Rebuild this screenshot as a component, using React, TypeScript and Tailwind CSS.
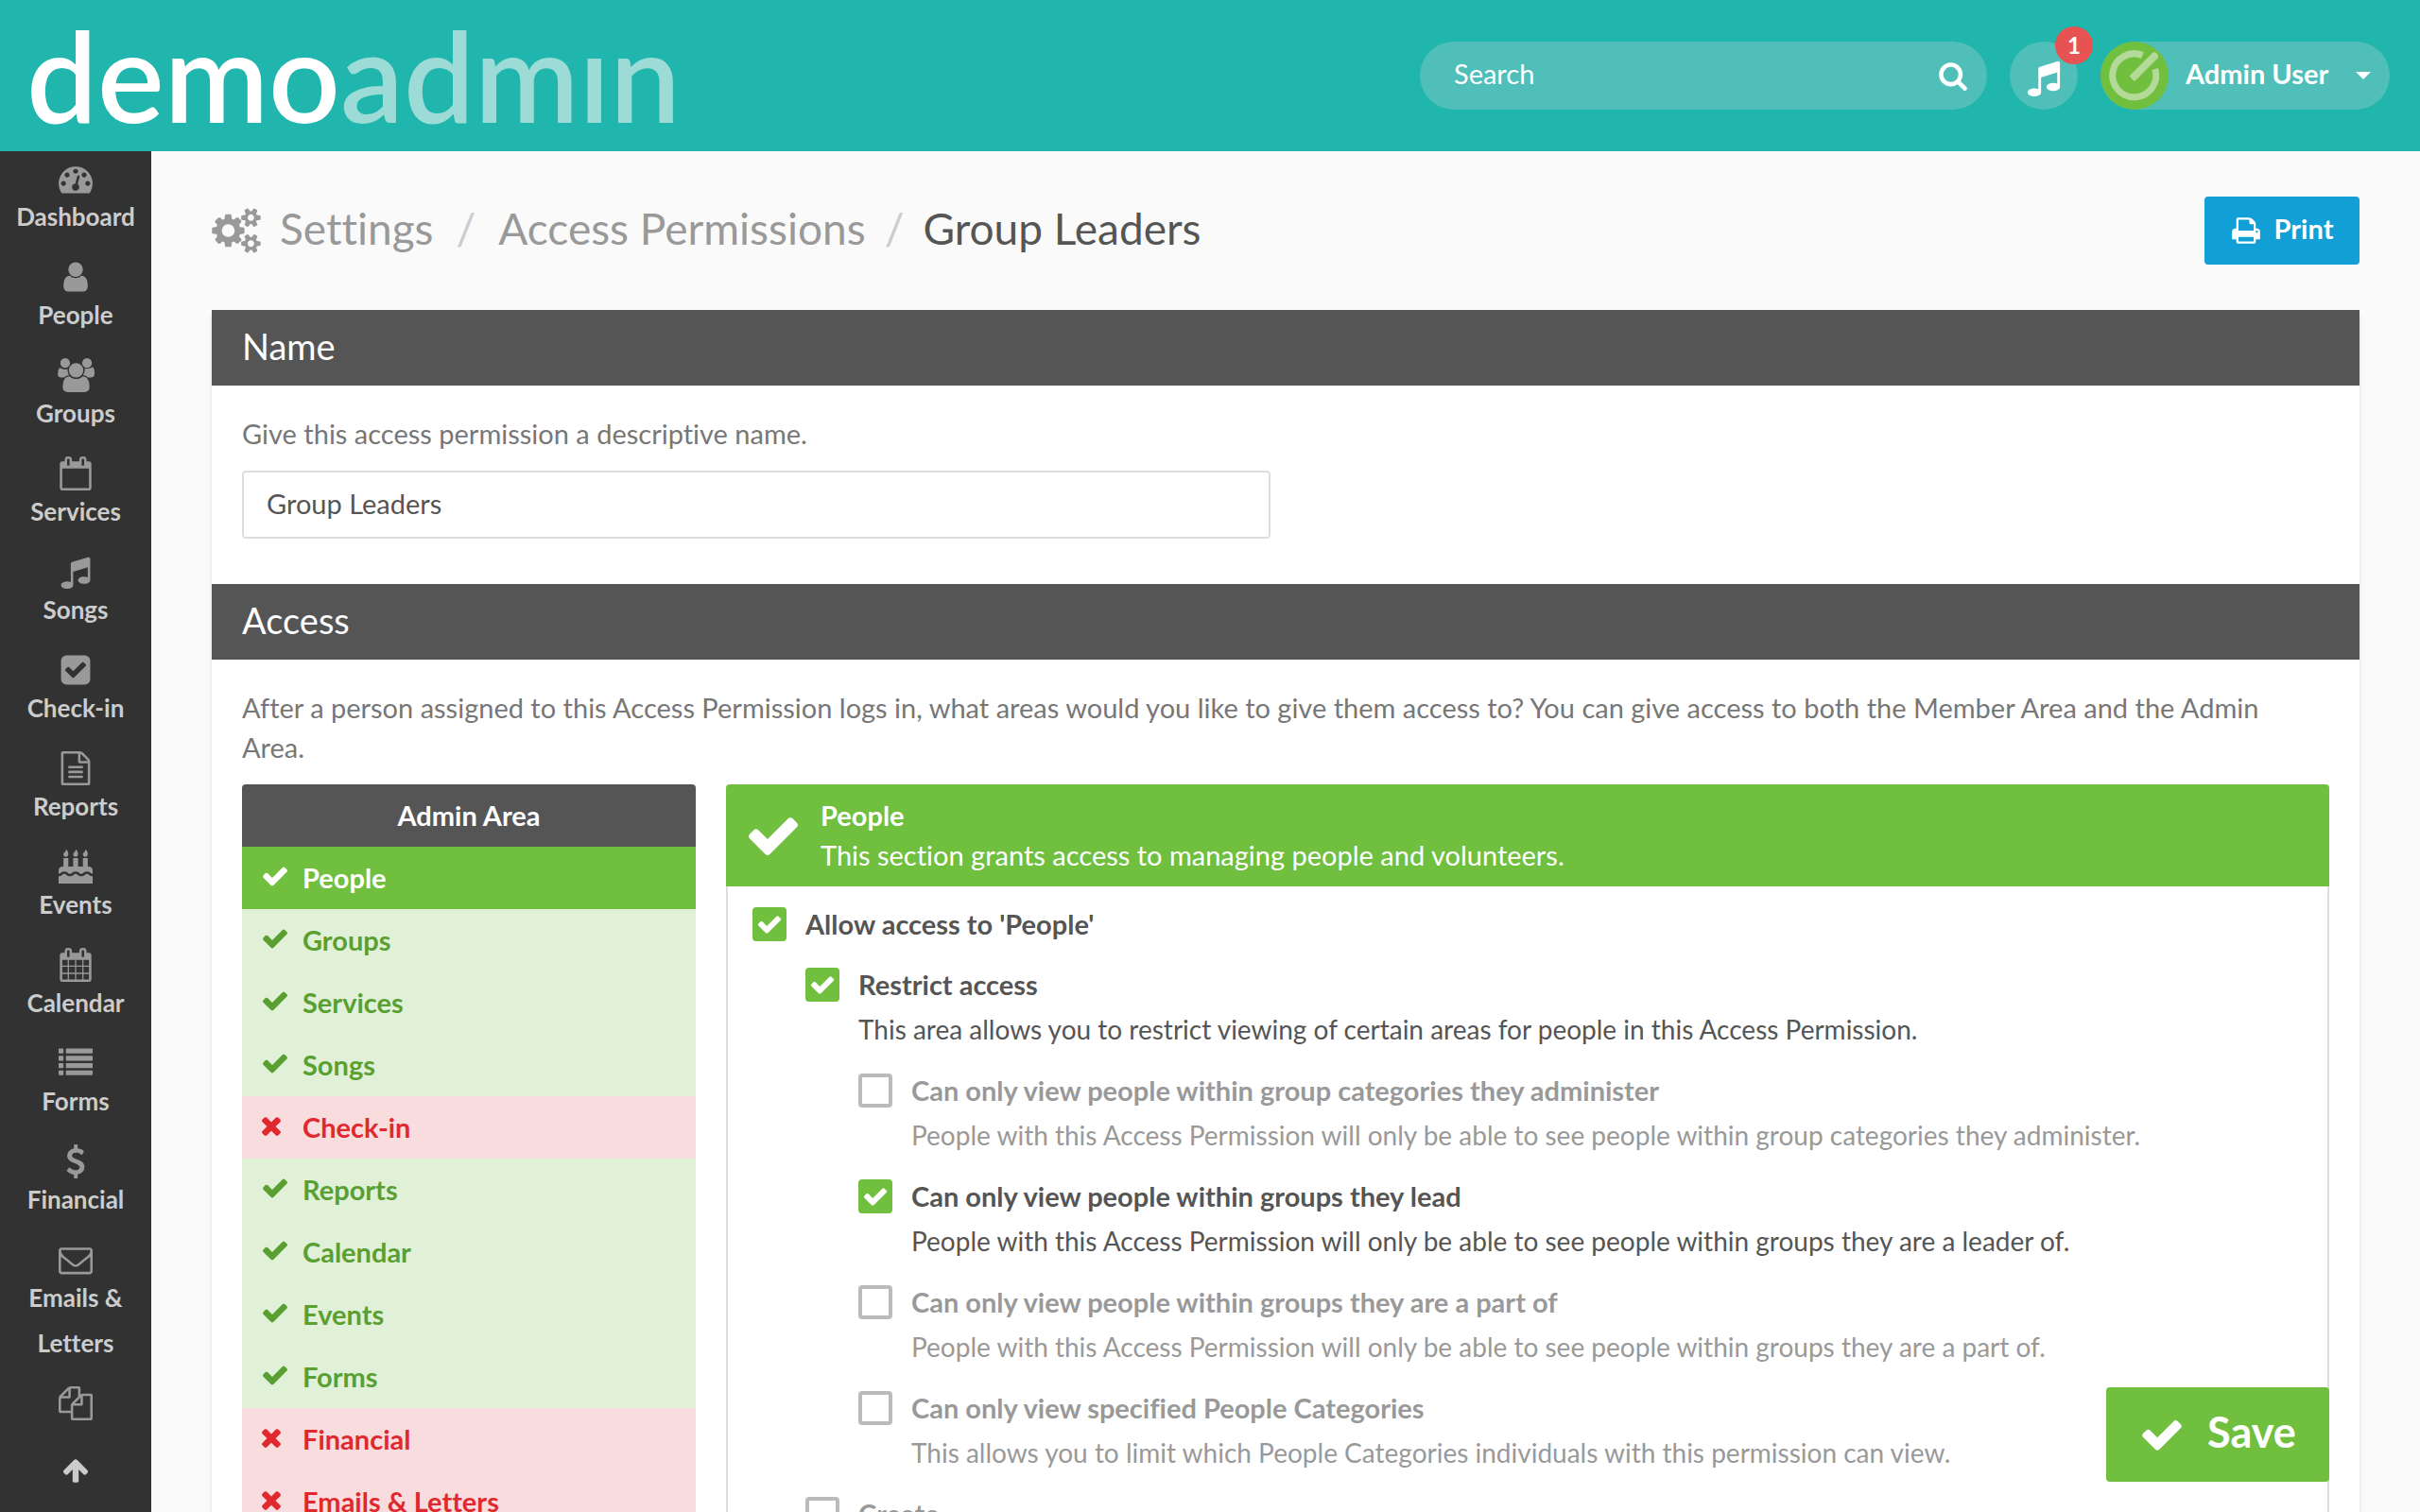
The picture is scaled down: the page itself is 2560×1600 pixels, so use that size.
import type { ReactNode } from 'react'
import clsx from 'clsx'

const icons = {
  dashboard:
    'M384 1152q0-53-37.5-90.5t-90.5-37.5-90.5 37.5-37.5 90.5 37.5 90.5 90.5 37.5 90.5-37.5 37.5-90.5zm192-448q0-53-37.5-90.5t-90.5-37.5-90.5 37.5-37.5 90.5 37.5 90.5 90.5 37.5 90.5-37.5 37.5-90.5zm428 481l101-382q6-26-7.5-48.5t-38.5-29.5-48 6.5-30 39.5l-101 382q-60 5-107 43.5t-63 98.5q-20 77 20 146t117 89 146-20 89-117q16-60-6-117t-72-91zm660-33q0-53-37.5-90.5t-90.5-37.5-90.5 37.5-37.5 90.5 37.5 90.5 90.5 37.5 90.5-37.5 37.5-90.5zm-640-640q0-53-37.5-90.5t-90.5-37.5-90.5 37.5-37.5 90.5 37.5 90.5 90.5 37.5 90.5-37.5 37.5-90.5zm448 192q0-53-37.5-90.5t-90.5-37.5-90.5 37.5-37.5 90.5 37.5 90.5 90.5 37.5 90.5-37.5 37.5-90.5zm320 448q0 261-141 483-19 29-54 29h-1402q-35 0-54-29-141-221-141-483 0-182 71-348t191-286 286-191 348-71 348 71 286 191 191 286 71 348z',
  user: 'M1536 1399q0 109-62.5 187t-150.5 78h-854q-88 0-150.5-78t-62.5-187q0-85 8.5-160.5t31.5-152 58.5-131 94-89 134.5-34.5q131 128 313 128t313-128q76 0 134.5 34.5t94 89 58.5 131 31.5 152 8.5 160.5zm-256-887q0 159-112.5 271.5t-271.5 112.5-271.5-112.5-112.5-271.5 112.5-271.5 271.5-112.5 271.5 112.5 112.5 271.5z',
  users:
    'M529 896q-162 5-265 128h-134q-82 0-138-40.5t-56-118.5q0-353 124-353 6 0 43.5 21t97.5 42.5 119 21.5q67 0 133-23-5 37-5 66 0 159 93 291zm1071 637q0 120-73 189.5t-194 69.5h-874q-121 0-194-69.5t-73-189.5q0-53 3.5-103.5t14-109 26.5-108.5 43-97.5 62-81 85.5-53.5 111.5-20q10 0 43 21.5t73 48 107 48 135 21.5 135-21.5 107-48 73-48 43-21.5q61 0 111.5 20t85.5 53.5 62 81 43 97.5 26.5 108.5 14 109 3.5 103.5zm-1024-1277q0 106-75 181t-181 75-181-75-75-181 75-181 181-75 181 75 75 181zm704 384q0 159-112.5 271.5t-271.5 112.5-271.5-112.5-112.5-271.5 112.5-271.5 271.5-112.5 271.5 112.5 112.5 271.5zm576 225q0 78-56 118.5t-138 40.5h-134q-103-123-265-128 93-132 93-291 0-29-5-66 66 23 133 23 59 0 119-21.5t97.5-42.5 43.5-21q124 0 124 353zm-128-609q0 106-75 181t-181 75-181-75-75-181 75-181 181-75 181 75 75 181z',
  calendarBlank:
    'M192 1664h1408v-1024h-1408v1024zm384-1216v-288q0-14-9-23t-23-9h-64q-14 0-23 9t-9 23v288q0 14 9 23t23 9h64q14 0 23-9t9-23zm768 0v-288q0-14-9-23t-23-9h-64q-14 0-23 9t-9 23v288q0 14 9 23t23 9h64q14 0 23-9t9-23zm384-64v1280q0 52-38 90t-90 38h-1408q-52 0-90-38t-38-90v-1280q0-52 38-90t90-38h128v-96q0-66 47-113t113-47h64q66 0 113 47t47 113v96h384v-96q0-66 47-113t113-47h64q66 0 113 47t47 113v96h128q52 0 90 38t38 90z',
  music:
    'M1664 224v1120q0 50-34 89t-86 60.5-103.5 32-96.5 10.5-96.5-10.5-103.5-32-86-60.5-34-89 34-89 86-60.5 103.5-32 96.5-10.5q105 0 192 39v-537l-768 237v709q0 50-34 89t-86 60.5-103.5 32-96.5 10.5-96.5-10.5-103.5-32-86-60.5-34-89 34-89 86-60.5 103.5-32 96.5-10.5q105 0 192 39v-967q0-31 19-56.5t49-35.5l832-256q12-4 28-4 40 0 68 28t28 68z',
  checkSquare:
    'M813 1299l614-614q19-19 19-45t-19-45l-102-102q-19-19-45-19t-45 19l-467 467-211-211q-19-19-45-19t-45 19l-102 102q-19 19-19 45t19 45l358 358q19 19 45 19t45-19zm851-883v960q0 119-84.5 203.5t-203.5 84.5h-960q-119 0-203.5-84.5t-84.5-203.5v-960q0-119 84.5-203.5t203.5-84.5h960q119 0 203.5 84.5t84.5 203.5z',
  file: 'M1596 380q28 28 48 76t20 88v1152q0 40-28 68t-68 28h-1344q-40 0-68-28t-28-68v-1600q0-40 28-68t68-28h896q40 0 88 20t76 48zm-444-244v376h376q-10-29-22-41l-313-313q-12-12-41-22zm384 1528v-1024h-416q-40 0-68-28t-28-68v-416h-768v1536h1280zm-1024-864q0-14 9-23t23-9h704q14 0 23 9t9 23v64q0 14-9 23t-23 9h-704q-14 0-23-9t-9-23v-64zm736 224q14 0 23 9t9 23v64q0 14-9 23t-23 9h-704q-14 0-23-9t-9-23v-64q0-14 9-23t23-9h704zm0 256q14 0 23 9t9 23v64q0 14-9 23t-23 9h-704q-14 0-23-9t-9-23v-64q0-14 9-23t23-9h704z',
  cake: 'M1792 1408v384h-1792v-384q45 0 85-14t59-27.5 47-37.5q30-27 51.5-38t56.5-11q24 0 44 7t31 15 33 27q29 25 47 38t58 27 86 14q45 0 85-14.5t58-27 48-37.5q21-19 32.5-27t31-15 43.5-7q35 0 56.5 11t51.5 38q28 24 47 37.5t59 27.5 85 14 85-14 59-27.5 47-37.5q30-27 51.5-38t56.5-11q34 0 55.5 11t51.5 38q28 24 47 37.5t59 27.5 85 14zm0-320v192q-24 0-44-7t-31-15-33-27q-29-25-47-38t-58-27-85-14q-46 0-86 14t-58 27-47 38q-22 19-33 27t-31 15-44 7q-35 0-56.5-11t-51.5-38q-29-25-47-38t-58-27-86-14q-45 0-85 14.5t-58 27-48 37.5q-21 19-32.5 27t-31 15-43.5 7q-35 0-56.5-11t-51.5-38q-28-24-47-37.5t-59-27.5-85-14q-46 0-86 14t-58 27-47 38q-22 19-33 27t-31 15-44 7v-192q0-80 56-136t136-56h64v-448h256v448h256v-448h256v448h256v-448h256v448h64q80 0 136 56t56 136zm-1280-864q0 77-36 118.5t-92 41.5q-53 0-90.5-37.5t-37.5-90.5q0-29 9.5-51t23.5-34 31-28 31-31.5 23.5-44.5 9.5-67q38 0 83 74t45 150zm512 0q0 77-36 118.5t-92 41.5q-53 0-90.5-37.5t-37.5-90.5q0-29 9.5-51t23.5-34 31-28 31-31.5 23.5-44.5 9.5-67q38 0 83 74t45 150zm512 0q0 77-36 118.5t-92 41.5q-53 0-90.5-37.5t-37.5-90.5q0-29 9.5-51t23.5-34 31-28 31-31.5 23.5-44.5 9.5-67q38 0 83 74t45 150z',
  calendar:
    'M192 1664h288v-288h-288v288zm352 0h320v-288h-320v288zm-352-352h288v-320h-288v320zm352 0h320v-320h-320v320zm-352-384h288v-288h-288v288zm736 736h320v-288h-320v288zm-384-736h320v-288h-320v288zm768 736h288v-288h-288v288zm-384-352h320v-320h-320v320zm-352-864v-288q0-13-9.5-22.5t-22.5-9.5h-64q-13 0-22.5 9.5t-9.5 22.5v288q0 13 9.5 22.5t22.5 9.5h64q13 0 22.5-9.5t9.5-22.5zm736 864h288v-320h-288v320zm-384-384h320v-288h-320v288zm384 0h288v-288h-288v288zm32-480v-288q0-13-9.5-22.5t-22.5-9.5h-64q-13 0-22.5 9.5t-9.5 22.5v288q0 13 9.5 22.5t22.5 9.5h64q13 0 22.5-9.5t9.5-22.5zm384-64v1280q0 52-38 90t-90 38h-1408q-52 0-90-38t-38-90v-1280q0-52 38-90t90-38h128v-96q0-66 47-113t113-47h64q66 0 113 47t47 113v96h384v-96q0-66 47-113t113-47h64q66 0 113 47t47 113v96h128q52 0 90 38t38 90z',
  list: 'M32 128h192q32 0 32 32v192q0 32-32 32h-192q-32 0-32-32v-192q0-32 32-32zM32 512h192q32 0 32 32v192q0 32-32 32h-192q-32 0-32-32v-192q0-32 32-32zM32 896h192q32 0 32 32v192q0 32-32 32h-192q-32 0-32-32v-192q0-32 32-32zM32 1280h192q32 0 32 32v192q0 32-32 32h-192q-32 0-32-32v-192q0-32 32-32zM416 128h1344q32 0 32 32v192q0 32-32 32h-1344q-32 0-32-32v-192q0-32 32-32zM416 512h1344q32 0 32 32v192q0 32-32 32h-1344q-32 0-32-32v-192q0-32 32-32zM416 896h1344q32 0 32 32v192q0 32-32 32h-1344q-32 0-32-32v-192q0-32 32-32zM416 1280h1344q32 0 32 32v192q0 32-32 32h-1344q-32 0-32-32v-192q0-32 32-32z',
  dollar:
    'M1362 1185q0 153-99.5 263.5t-258.5 136.5v175q0 14-9 23t-23 9h-135q-13 0-22.5-9.5t-9.5-22.5v-175q-66-9-127.5-31t-101.5-44.5-74-48-46.5-37.5-17.5-18q-17-21-2-41l103-135q7-10 23-12 15-2 24 9l2 2q113 99 243 125 37 8 74 8 81 0 142.5-43t61.5-122q0-28-15-53t-33.5-42-58.5-37.5-66-32-80-32.5q-39-16-61.5-25t-61.5-26.5-62.5-31-56.5-35.5-53.5-42.5-43.5-49-35.5-58-21-66.5-8.5-78q0-138 98-242t255-134v-180q0-13 9.5-22.5t22.5-9.5h135q14 0 23 9t9 23v176q57 6 110.5 23t87 33.5 63.5 37.5 39 29 15 14q17 18 5 38l-81 146q-8 15-23 16-14 3-27-7-3-3-14.5-12t-39-26.5-58.5-32-74.5-26-85.5-11.5q-95 0-155 43t-60 111q0 26 8.5 48t29.5 41.5 39.5 33 56 31 60.5 27 70 27.5q53 20 81 31.5t76 35 75.5 42.5 62 50 53 63.5 31.5 76.5 13 94z',
  envelope:
    'M1664 1504v-768q-32 36-69 66-268 206-426 338-51 43-83 67t-86.5 48.5-102.5 24.5h-2q-48 0-102.5-24.5t-86.5-48.5-83-67q-158-132-426-338-37-30-69-66v768q0 13 9.5 22.5t22.5 9.5h1472q13 0 22.5-9.5t9.5-22.5zm0-1051v-24.5l-.5-13-3-12.5-5.5-9-9-7.5-14-2.5h-1472q-13 0-22.5 9.5t-9.5 22.5q0 168 147 284 193 152 401 317 6 5 35 29.5t46 37.5 44.5 31.5 50.5 27.5 43 9h2q20 0 43-9t50.5-27.5 44.5-31.5 46-37.5 35-29.5q208-165 401-317 54-43 100.5-115.5t46.5-131.5zm128-37v1088q0 66-47 113t-113 47h-1472q-66 0-113-47t-47-113v-1088q0-66 47-113t113-47h1472q66 0 113 47t47 113z',
  files:
    'M1696 384q40 0 68 28t28 68v1216q0 40-28 68t-68 28h-960q-40 0-68-28t-28-68v-288h-544q-40 0-68-28t-28-68v-672q0-40 20-88t48-76l408-408q28-28 76-48t88-20h416q40 0 68 28t28 68v328q68-40 128-40h416zm-544 213l-299 299h299v-299zm-640-384l-299 299h299v-299zm196 647l316-316v-416h-384v416q0 40-28 68t-68 28h-416v640h512v-256q0-40 20-88t48-76zm956 804v-1152h-384v416q0 40-28 68t-68 28h-416v640h896z',
  arrowUp:
    'M1675 971q0 51-37 90l-75 75q-38 38-91 38-54 0-90-38l-294-293v704q0 52-37.5 84.5t-90.5 32.5h-128q-53 0-90.5-32.5t-37.5-84.5v-704l-294 293q-36 38-90 38t-90-38l-75-75q-38-38-38-90 0-53 38-91l651-651q35-37 90-37 54 0 91 37l651 651q37 39 37 91z',
  search:
    'M1216 832q0-185-131.5-316.5t-316.5-131.5-316.5 131.5-131.5 316.5 131.5 316.5 316.5 131.5 316.5-131.5 131.5-316.5zm512 832q0 52-38 90t-90 38q-54 0-90-38l-343-342q-179 124-399 124-143 0-273.5-55.5t-225-150-150-225-55.5-273.5 55.5-273.5 150-225 225-150 273.5-55.5 273.5 55.5 225 150 150 225 55.5 273.5q0 220-124 399l343 343q37 37 37 90z',
  cogs: 'M832 896q0-106-75-181t-181-75-181 75-75 181 75 181 181 75 181-75 75-181zm768 512q0-52-38-90t-90-38-90 38-38 90q0 53 37.5 90.5t90.5 37.5 90.5-37.5 37.5-90.5zm0-1024q0-52-38-90t-90-38-90 38-38 90q0 53 37.5 90.5t90.5 37.5 90.5-37.5 37.5-90.5zm-384 421v185q0 10-7 19.5t-16 10.5l-155 24q-11 35-32 76 34 48 90 115 7 11 7 20 0 12-7 19-23 30-82.5 89.5t-78.5 59.5q-11 0-21-7l-115-90q-37 19-77 31-11 108-23 155-7 24-30 24h-186q-11 0-20-7.5t-10-17.5l-23-153q-34-10-75-31l-118 89q-7 7-20 7-11 0-21-8-144-133-144-160 0-9 7-19 10-14 41-53t47-61q-23-44-35-82l-152-24q-10-1-17-9.5t-7-19.5v-185q0-10 7-19.5t16-10.5l155-24q11-35 32-76-34-48-90-115-7-11-7-20 0-12 7-20 22-30 82-89t79-59q11 0 21 7l115 90q34-18 77-32 11-108 23-154 7-24 30-24h186q11 0 20 7.5t10 17.5l23 153q34 10 75 31l118-89q8-7 20-7 11 0 21 8 144 133 144 160 0 8-7 19-12 16-42 54t-45 60q23 48 34 82l152 23q10 2 17 10.5t7 19.5zm640 533v140q0 16-149 31-12 27-30 52 51 113 51 138 0 4-4 7-122 71-124 71-8 0-46-47t-52-68q-20 2-30 2t-30-2q-14 21-52 68t-46 47q-2 0-124-71-4-3-4-7 0-25 51-138-18-25-30-52-149-15-149-31v-140q0-16 149-31 13-29 30-52-51-113-51-138 0-4 4-7 4-2 35-20t59-34 30-16q8 0 46 46.5t52 67.5q20-2 30-2t30 2q51-71 92-112l6-2q4 0 124 70 4 3 4 7 0 25-51 138 17 23 30 52 149 15 149 31zm0-1024v140q0 16-149 31-12 27-30 52 51 113 51 138 0 4-4 7-122 71-124 71-8 0-46-47t-52-68q-20 2-30 2t-30-2q-14 21-52 68t-46 47q-2 0-124-71-4-3-4-7 0-25 51-138-18-25-30-52-149-15-149-31v-140q0-16 149-31 13-29 30-52-51-113-51-138 0-4 4-7 4-2 35-20t59-34 30-16q8 0 46 46.5t52 67.5q20-2 30-2t30 2q51-71 92-112l6-2q4 0 124 70 4 3 4 7 0 25-51 138 17 23 30 52 149 15 149 31z',
  print:
    'M448 1536h896v-256h-896v256zm0-640h896v-384h-160q-40 0-68-28t-28-68v-160h-640v640zm1152 64q0-26-19-45t-45-19-45 19-19 45 19 45 45 19 45-19 19-45zm128 0v416q0 13-9.5 22.5t-22.5 9.5h-224v160q0 40-28 68t-68 28h-960q-40 0-68-28t-28-68v-160h-224q-13 0-22.5-9.5t-9.5-22.5v-416q0-79 56.5-135.5t135.5-56.5h64v-544q0-40 28-68t68-28h672q40 0 88 20t76 48l152 152q28 28 48 76t20 88v256h64q79 0 135.5 56.5t56.5 135.5z',
  check:
    'M1671 566q0 40-28 68l-724 724-136 136q-28 28-68 28t-68-28l-136-136-362-362q-28-28-28-68t28-68l136-136q28-28 68-28t68 28l294 295 656-657q28-28 68-28t68 28l136 136q28 28 28 68z',
  times:
    'M1490 1322q0 40-28 68l-136 136q-28 28-68 28t-68-28l-294-294-294 294q-28 28-68 28t-68-28l-136-136q-28-28-28-68t28-68l294-294-294-294q-28-28-28-68t28-68l136-136q28-28 68-28t68 28l294 294 294-294q28-28 68-28t68 28l136 136q28 28 28 68t-28 68l-294 294 294 294q28 28 28 68z',
}

type IconName = keyof typeof icons

function Icon({ name, className }: { name: IconName; className?: string }) {
  // the two widest glyphs hang over the 1792 unit square
  const wide = name === 'users' || name === 'cogs'
  return (
    <svg viewBox={wide ? '-64 0 1920 1792' : '0 0 1792 1792'} fill="currentColor" aria-hidden="true" className={clsx('shrink-0', className)}>
      <path d={icons[name]} />
    </svg>
  )
}

const navItems: { label: string; icon: IconName }[] = [
  { label: 'Dashboard', icon: 'dashboard' },
  { label: 'People', icon: 'user' },
  { label: 'Groups', icon: 'users' },
  { label: 'Services', icon: 'calendarBlank' },
  { label: 'Songs', icon: 'music' },
  { label: 'Check-in', icon: 'checkSquare' },
  { label: 'Reports', icon: 'file' },
  { label: 'Events', icon: 'cake' },
  { label: 'Calendar', icon: 'calendar' },
  { label: 'Forms', icon: 'list' },
  { label: 'Financial', icon: 'dollar' },
  { label: 'Emails & Letters', icon: 'envelope' },
]

const areas: { label: string; allowed: boolean }[] = [
  { label: 'People', allowed: true },
  { label: 'Groups', allowed: true },
  { label: 'Services', allowed: true },
  { label: 'Songs', allowed: true },
  { label: 'Check-in', allowed: false },
  { label: 'Reports', allowed: true },
  { label: 'Calendar', allowed: true },
  { label: 'Events', allowed: true },
  { label: 'Forms', allowed: true },
  { label: 'Financial', allowed: false },
  { label: 'Emails & Letters', allowed: false },
]

function Header() {
  return (
    <header className="flex h-40 shrink-0 items-center justify-between bg-[#20b5ad] pl-7 pr-8 text-white">
      <a href="#" aria-label="demoadmin" className="pb-1 text-[133px] leading-none font-semibold">
        demo<span className="text-[#9ddcd6]">admın</span>
      </a>
      <div className="flex gap-6">
        <form className="flex h-[72px] w-[600px] items-center rounded-full bg-[#50beb9] pl-9 pr-5">
          <input
            type="text"
            aria-label="Search"
            placeholder="Search"
            className="min-w-0 flex-1 bg-transparent pb-1 text-[29px] outline-none placeholder:text-white"
          />
          <button type="button" aria-label="Search">
            <Icon name="search" className="size-8" />
          </button>
        </form>
        <button type="button" aria-label="Songs" className="relative flex size-[72px] items-center justify-center rounded-full bg-[#50beb9] pt-1">
          <Icon name="music" className="size-10" />
          <span className="absolute -top-4 -right-4 flex size-10 items-center justify-center rounded-full bg-[#e75353] text-2xl font-bold">1</span>
        </button>
        <button type="button" className="flex h-[72px] w-[306px] items-center rounded-full bg-[#50beb9] pr-5 text-[29px] font-bold">
          <svg viewBox="0 0 72 72" aria-hidden="true" className="mr-[18px] size-[72px]">
            <circle cx="36" cy="36" r="36" fill="#70bf3f" />
            <path d="M44.500 14.500A23 23 0 1 0 57.700 29" fill="none" stroke="#b3da98" strokeWidth="7" />
            <path d="M36 37 57 16" stroke="#70bf3f" strokeWidth="13" />
            <path d="M36 36.500 57 15.500" stroke="#b3da98" strokeWidth="8" strokeLinecap="round" />
            <path d="M30.500 36.500 36 42l5-5-6-5z" fill="#b3da98" />
          </svg>
          <span className="pb-1">Admin User</span>
          <svg viewBox="0 0 16 8" fill="currentColor" aria-hidden="true" className="ml-auto h-2 w-4">
            <path d="M0 0h16L8 8z" />
          </svg>
        </button>
      </div>
    </header>
  )
}

function Sidebar() {
  return (
    <aside className="flex w-40 shrink-0 flex-col bg-[#323232] text-center text-[26px] leading-[48px] font-bold text-[#ccc]">
      <nav className="min-h-0 flex-1 overflow-hidden">
        {navItems.map(({ label, icon }) => (
          <a key={label} href="#" className="flex flex-col items-center px-2 pt-[11px] pb-[11px]">
            <Icon name={icon} className={clsx('-mb-[2px] h-9 text-[#999]', icon === 'users' ? 'w-[39px]' : 'w-9')} />
            {label}
          </a>
        ))}
        <a href="#" aria-label="Files" className="flex flex-col items-center px-2 pt-[11px]">
          <Icon name="files" className="size-9 text-[#999]" />
        </a>
      </nav>
      <a href="#" aria-label="Back to top" className="flex h-[88px] shrink-0 items-center justify-center">
        <Icon name="arrowUp" className="size-[30px]" />
      </a>
    </aside>
  )
}

function Breadcrumb() {
  return (
    <nav aria-label="Breadcrumb" className="flex items-center text-[46px] leading-[68px] text-[#999]">
      <Icon name="cogs" className="mr-5 h-12 w-[52px]" />
      <a href="#" className="pb-1">Settings</a>
      <span className="px-6 pb-1 text-[#ccc]">/</span>
      <a href="#" className="pb-1">Access Permissions</a>
      <span className="px-5 pb-1 text-[#ccc]">/</span>
      <span className="pb-1 text-[#555]">Group Leaders</span>
    </nav>
  )
}

function SectionHeader({ children }: { children: ReactNode }) {
  return <h2 className="bg-[#555] px-8 pb-1 text-[38px] leading-[76px] text-white">{children}</h2>
}

function AreaList() {
  return (
    <div className="w-[480px] shrink-0 overflow-hidden rounded-t text-[29px] leading-[66px] font-bold">
      <h3 className="bg-[#555] text-center text-white">Admin Area</h3>
      <ul>
        {areas.map(({ label, allowed }, i) => (
          <li key={label}>
            <a
              href="#"
              className={clsx(
                'flex items-center gap-[14px] pl-5',
                i === 0 && 'bg-[#70bf3f] text-white',
                i > 0 && allowed && 'bg-[#e1f1d8] text-[#5a9f32]',
                !allowed && 'bg-[#f9dcde] text-[#e0292e]',
              )}
            >
              <Icon name={allowed ? 'check' : 'times'} className={clsx('mb-1 size-[30px]', !allowed && '-ml-1 mr-1')} />
              {label}
            </a>
          </li>
        ))}
      </ul>
    </div>
  )
}

interface PermissionProps {
  id: string
  label: string
  description?: string
  checked?: boolean
  level?: 0 | 1 | 2
}

function Permission({ id, label, description, checked = false, level = 0 }: PermissionProps) {
  return (
    <div className={clsx('flex items-start gap-5', level === 1 && 'pl-14', level === 2 && 'pl-28', checked ? 'text-[#555]' : 'text-[#999]')}>
      <span className="relative size-9 shrink-0">
        <input
          id={id}
          type="checkbox"
          defaultChecked={checked}
          className="peer block size-9 appearance-none rounded border-4 border-[#bbb] bg-white checked:border-[#70bf3f] checked:bg-[#70bf3f]"
        />
        <Icon name="check" className="pointer-events-none absolute top-1 left-1 hidden size-7 text-white peer-checked:block" />
      </span>
      <div>
        <label htmlFor={id} className="block text-[29px] leading-9 font-bold">{label}</label>
        {description && <p className="pt-[10px] text-[28px] leading-[38px]">{description}</p>}
      </div>
    </div>
  )
}

function PeoplePanel() {
  return (
    <section className="min-w-0 flex-1">
      <div className="flex items-center gap-5 rounded-t bg-[#70bf3f] px-5 py-3 text-[29px] leading-[42px] text-white">
        <Icon name="check" className="size-[60px]" />
        <div>
          <h3 className="font-bold">People</h3>
          <p>This section grants access to managing people and volunteers.</p>
        </div>
      </div>
      <div className="flex flex-col gap-7 border-x-2 border-[#ddd] px-[26px] py-[22px]">
        <Permission id="allow" label="Allow access to 'People'" checked />
        <Permission
          id="restrict"
          level={1}
          checked
          label="Restrict access"
          description="This area allows you to restrict viewing of certain areas for people in this Access Permission."
        />
        <Permission
          id="administer"
          level={2}
          label="Can only view people within group categories they administer"
          description="People with this Access Permission will only be able to see people within group categories they administer."
        />
        <Permission
          id="lead"
          level={2}
          checked
          label="Can only view people within groups they lead"
          description="People with this Access Permission will only be able to see people within groups they are a leader of."
        />
        <Permission
          id="part"
          level={2}
          label="Can only view people within groups they are a part of"
          description="People with this Access Permission will only be able to see people within groups they are a part of."
        />
        <Permission
          id="categories"
          level={2}
          label="Can only view specified People Categories"
          description="This allows you to limit which People Categories individuals with this permission can view."
        />
        <Permission id="create" level={1} label="Create" />
      </div>
    </section>
  )
}

export default function App() {
  return (
    <div className="flex h-screen flex-col overflow-hidden bg-[#fafafa] font-['Lato',sans-serif] [font-variant-ligatures:no-common-ligatures]">
      <Header />
      <div className="flex min-h-0 flex-1">
        <Sidebar />
        <main className="min-w-0 flex-1 overflow-hidden px-16 pt-12">
          <div className="mb-12 flex items-center justify-between">
            <Breadcrumb />
            <button
              type="button"
              className="flex h-[72px] w-[164px] items-center justify-center gap-[14px] rounded bg-[#119fd5] text-[29px] font-bold text-white"
            >
              <Icon name="print" className="size-8" />
              <span className="pb-1">Print</span>
            </button>
          </div>
          <div className="bg-white shadow-md">
            <SectionHeader>Name</SectionHeader>
            <div className="grid grid-cols-2 gap-x-8 px-8 pt-[30px] pb-12 text-[29px] leading-[42px]">
              <label htmlFor="name" className="mb-[18px] text-[#777]">
                Give this access permission a descriptive name.
              </label>
              <input
                id="name"
                type="text"
                defaultValue="Group Leaders"
                className="col-start-1 h-[72px] rounded border-2 border-[#ddd] px-6 pb-1 text-[#555] outline-none"
              />
            </div>
            <SectionHeader>Access</SectionHeader>
            <div className="px-8 pt-[30px] pb-12">
              <p className="mb-[18px] pr-12 text-[29px] leading-[42px] text-[#777]">
                After a person assigned to this Access Permission logs in, what areas would you like to give them access to? You can give access
                to both the Member Area and the Admin Area.
              </p>
              <div className="flex items-start gap-8">
                <AreaList />
                <PeoplePanel />
              </div>
            </div>
          </div>
        </main>
      </div>
      <button
        type="button"
        className="fixed right-24 bottom-8 flex h-[100px] w-[236px] items-center justify-center gap-6 rounded bg-[#70bf3f] text-[45px] font-bold text-white"
      >
        <Icon name="check" className="size-12" />
        <span className="pb-1">Save</span>
      </button>
    </div>
  )
}
